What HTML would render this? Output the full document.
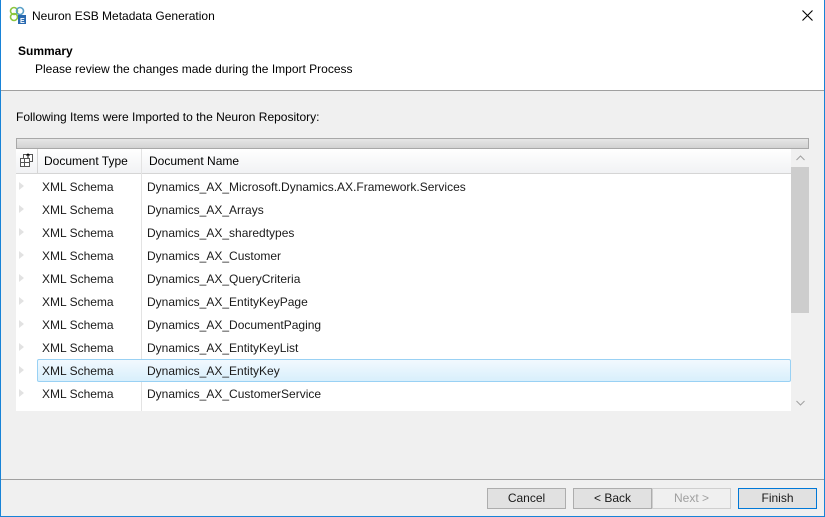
<!DOCTYPE html>
<html><head><style>
*{margin:0;padding:0;box-sizing:border-box}
body{width:825px;height:517px;overflow:hidden;background:#f0f0f0;font-family:"Liberation Sans",sans-serif;font-size:12px;color:#1a1a1a;position:relative}
.abs{position:absolute}
#win{left:0;top:0;width:825px;height:517px;border:1px solid #1883d7;border-top:none}
#hdr{left:1px;top:0;width:823px;height:91px;background:#fff;border-bottom:1px solid #a0a0a0}
.t{position:absolute;white-space:nowrap}
.row{position:absolute;left:17px;width:774px;height:23px}
.row .a{position:absolute;left:2px;top:7px;width:0;height:0;border-left:5px solid #e2e2e2;border-top:4px solid transparent;border-bottom:4px solid transparent}
.row .c1{position:absolute;left:25px;top:5px}
.row .c2{position:absolute;left:130px;top:5px}
.btn{position:absolute;top:488px;height:21px;border:1px solid #adadad;background:#e1e1e1;text-align:center;line-height:19px;font-size:12px}
</style></head><body>
<div id="win" class="abs"></div>
<div id="hdr" class="abs"></div>
<svg class="abs" style="left:9px;top:6px" width="18" height="18" viewBox="0 0 18 18">
<circle cx="5" cy="5" r="3.5" fill="none" stroke="#8dc63f" stroke-width="1.6"/>
<circle cx="11" cy="5" r="3.5" fill="none" stroke="#5aa0c8" stroke-width="1.6"/>
<circle cx="5" cy="11" r="3.5" fill="none" stroke="#8dc63f" stroke-width="1.6"/>
<rect x="9" y="9" width="8" height="9" fill="#2a6ab0"/>
<text x="11" y="17" font-size="7" fill="#fff" font-family="Liberation Sans" font-weight="bold">E</text>
</svg>
<div class="t" style="left:32px;top:9px;font-size:12px;color:#000">Neuron ESB Metadata Generation</div>
<svg class="abs" style="left:802px;top:10px" width="11" height="11"><path d="M0.5 0.5L10.5 10.5M10.5 0.5L0.5 10.5" stroke="#000" stroke-width="1.1"/></svg>
<div class="t" style="left:18px;top:44px;font-weight:bold;color:#000">Summary</div>
<div class="t" style="left:35px;top:62px;color:#000">Please review the changes made during the Import Process</div>
<div class="t" style="left:16px;top:110px;color:#000">Following Items were Imported to the Neuron Repository:</div>
<div class="abs" style="left:16px;top:138px;width:793px;height:11px;border:1px solid #a8a8a8;background:linear-gradient(#e6e6e6,#d2d2d2)"></div>
<div class="abs" style="left:16px;top:149px;width:793px;height:262px;background:#fff"></div>
<div class="abs" style="left:16px;top:149px;width:775px;height:25px;background:linear-gradient(#fff,#f1f2f4);border-bottom:1px solid #d5d5d5"></div>
<div class="abs" style="left:37px;top:149px;width:1px;height:25px;background:#d5d5d5"></div>
<div class="abs" style="left:141px;top:149px;width:1px;height:262px;background:#e3e3e3"></div>
<svg class="abs" style="left:19px;top:153px" width="15" height="15" viewBox="0 0 15 15"><rect x="4.5" y="1.5" width="9" height="7" fill="#fff" stroke="#555"/><rect x="1.5" y="5.5" width="9" height="8" fill="#fff" stroke="#555"/><path d="M1.5 9.5H10.5M5.5 5.5V13.5" stroke="#555"/><path d="M9 1v4M7.5 2.5L9 1l1.5 1.5" stroke="#000"/></svg>
<div class="t" style="left:44px;top:154px;color:#000">Document Type</div>
<div class="t" style="left:149px;top:154px;color:#000">Document Name</div>
<div class="abs" style="left:791px;top:149px;width:18px;height:262px;background:#f0f0f0"></div>
<div class="abs" style="left:791px;top:167px;width:18px;height:146px;background:#cdcdcd"></div>
<svg class="abs" style="left:796px;top:155px" width="9" height="6"><path d="M0.5 5L4.5 1L8.5 5" fill="none" stroke="#a0a0a0"/></svg>
<svg class="abs" style="left:796px;top:400px" width="9" height="6"><path d="M0.5 1L4.5 5L8.5 1" fill="none" stroke="#a0a0a0"/></svg>
<div class="abs" style="left:37px;top:359px;width:754px;height:23px;border:1px solid #99d1f4;border-radius:2px;background:linear-gradient(#f2f9fe,#d8effc)"></div>
<div class="row" style="top:175px"><div class="a"></div><span class="c1">XML Schema</span><span class="c2">Dynamics_AX_Microsoft.Dynamics.AX.Framework.Services</span></div>
<div class="row" style="top:198px"><div class="a"></div><span class="c1">XML Schema</span><span class="c2">Dynamics_AX_Arrays</span></div>
<div class="row" style="top:221px"><div class="a"></div><span class="c1">XML Schema</span><span class="c2">Dynamics_AX_sharedtypes</span></div>
<div class="row" style="top:244px"><div class="a"></div><span class="c1">XML Schema</span><span class="c2">Dynamics_AX_Customer</span></div>
<div class="row" style="top:267px"><div class="a"></div><span class="c1">XML Schema</span><span class="c2">Dynamics_AX_QueryCriteria</span></div>
<div class="row" style="top:290px"><div class="a"></div><span class="c1">XML Schema</span><span class="c2">Dynamics_AX_EntityKeyPage</span></div>
<div class="row" style="top:313px"><div class="a"></div><span class="c1">XML Schema</span><span class="c2">Dynamics_AX_DocumentPaging</span></div>
<div class="row" style="top:336px"><div class="a"></div><span class="c1">XML Schema</span><span class="c2">Dynamics_AX_EntityKeyList</span></div>
<div class="row" style="top:359px"><div class="a"></div><span class="c1">XML Schema</span><span class="c2">Dynamics_AX_EntityKey</span></div>
<div class="row" style="top:382px"><div class="a"></div><span class="c1">XML Schema</span><span class="c2">Dynamics_AX_CustomerService</span></div>
<div class="abs" style="left:1px;top:479px;width:823px;height:1px;background:#a0a0a0"></div>
<div class="btn" style="left:487px;width:79px">Cancel</div>
<div class="btn" style="left:573px;width:79px">&lt; Back</div>
<div class="btn" style="left:652px;width:79px;background:#f0f0f0;border-color:#cfcfcf;color:#a0a0a0">Next &gt;</div>
<div class="btn" style="left:738px;width:79px;border:1px solid #0078d7">Finish</div>
</body></html>
